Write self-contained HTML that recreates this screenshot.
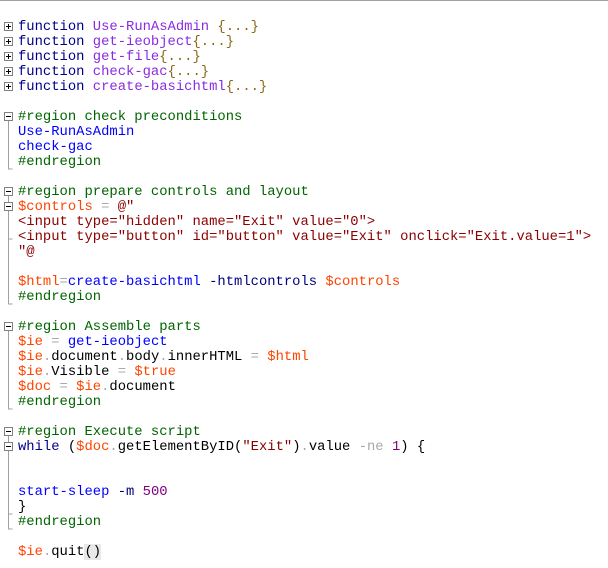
<!DOCTYPE html>
<html><head><meta charset="utf-8"><style>
html,body{margin:0;padding:0;background:#fff;}
body{width:608px;height:566px;position:relative;overflow:hidden;border-top:1px solid #a0a0a0;box-sizing:border-box;}
.w{position:absolute;left:0;top:1px;width:608px;height:566px;}
.l{position:absolute;left:18px;height:15px;line-height:15px;font-family:"Liberation Mono",monospace;font-size:13.85px;white-space:pre;color:#000;}
.k{color:#00008b}.f{color:#8a2be2}.b{color:#8b6914}.c{color:#006400}.m{color:#0000ff}.v{color:#ff4500}.s{color:#8b0000}.o{color:#a9a9a9}.n{color:#800080}.p{color:#000080}
svg{position:absolute;left:0;top:0}
</style></head><body>
<svg width="20" height="566" viewBox="0 0 20 566">
<g fill="#fff" stroke="#808080" stroke-width="1">
<rect x="4.5" y="21.5" width="8" height="8"/><rect x="4.5" y="36.5" width="8" height="8"/><rect x="4.5" y="51.5" width="8" height="8"/><rect x="4.5" y="66.5" width="8" height="8"/><rect x="4.5" y="81.5" width="8" height="8"/>
<rect x="4.5" y="111.5" width="8" height="8"/><rect x="4.5" y="186.5" width="8" height="8"/><rect x="4.5" y="201.5" width="8" height="8"/><rect x="4.5" y="321.5" width="8" height="8"/><rect x="4.5" y="426.5" width="8" height="8"/><rect x="4.5" y="441.5" width="8" height="8"/>
</g>
<g stroke="#000" stroke-width="1">
<path d="M6 25.5h5M8.5 23v5M6 40.5h5M8.5 38v5M6 55.5h5M8.5 53v5M6 70.5h5M8.5 68v5M6 85.5h5M8.5 83v5"/>
<path d="M6 115.5h5M6 190.5h5M6 205.5h5M6 325.5h5M6 430.5h5M6 445.5h5"/>
</g>
<g stroke="#a0a0a0" stroke-width="1" fill="none">
<path d="M8.5 120v48h4"/>
<path d="M8.5 195v6"/>
<path d="M8.5 210v28h4M8.5 238v65h4"/>
<path d="M8.5 330v78h4"/>
<path d="M8.5 435v6"/>
<path d="M8.5 450v63h4M8.5 513v15h4"/>
</g>
</svg>
<div class="w">
<div class="l" style="top:18px"><span class="k">function</span> <span class="f">Use-RunAsAdmin</span> <span class="b">{...}</span></div>
<div class="l" style="top:33px"><span class="k">function</span> <span class="f">get-ieobject</span><span class="b">{...}</span></div>
<div class="l" style="top:48px"><span class="k">function</span> <span class="f">get-file</span><span class="b">{...}</span></div>
<div class="l" style="top:63px"><span class="k">function</span> <span class="f">check-gac</span><span class="b">{...}</span></div>
<div class="l" style="top:78px"><span class="k">function</span> <span class="f">create-basichtml</span><span class="b">{...}</span></div>
<div class="l c" style="top:108px">#region check preconditions</div>
<div class="l m" style="top:123px">Use-RunAsAdmin</div>
<div class="l m" style="top:138px">check-gac</div>
<div class="l c" style="top:153px">#endregion</div>
<div class="l c" style="top:183px">#region prepare controls and layout</div>
<div class="l" style="top:198px"><span class="v">$controls</span> <span class="o">=</span> <span class="s">@"</span></div>
<div class="l s" style="top:213px">&lt;input type="hidden" name="Exit" value="0"&gt;</div>
<div class="l s" style="top:228px">&lt;input type="button" id="button" value="Exit" onclick="Exit.value=1"&gt;</div>
<div class="l s" style="top:243px">"@</div>
<div class="l" style="top:273px"><span class="v">$html</span><span class="o">=</span><span class="m">create-basichtml</span> <span class="p">-htmlcontrols</span> <span class="v">$controls</span></div>
<div class="l c" style="top:288px">#endregion</div>
<div class="l c" style="top:318px">#region Assemble parts</div>
<div class="l" style="top:333px"><span class="v">$ie</span> <span class="o">=</span> <span class="m">get-ieobject</span></div>
<div class="l" style="top:348px"><span class="v">$ie</span><span class="o">.</span>document<span class="o">.</span>body<span class="o">.</span>innerHTML <span class="o">=</span> <span class="v">$html</span></div>
<div class="l" style="top:363px"><span class="v">$ie</span><span class="o">.</span>Visible <span class="o">=</span> <span class="v">$true</span></div>
<div class="l" style="top:378px"><span class="v">$doc</span> <span class="o">=</span> <span class="v">$ie</span><span class="o">.</span>document</div>
<div class="l c" style="top:393px">#endregion</div>
<div class="l c" style="top:423px">#region Execute script</div>
<div class="l" style="top:438px"><span class="k">while</span> (<span class="v">$doc</span><span class="o">.</span>getElementByID(<span class="s">"Exit"</span>)<span class="o">.</span>value <span class="o">-ne</span> <span class="n">1</span>) {</div>
<div class="l" style="top:483px"><span class="m">start-sleep</span> <span class="p">-m</span> <span class="n">500</span></div>
<div class="l" style="top:498px">}</div>
<div class="l c" style="top:513px">#endregion</div>
<div class="l" style="top:543px"><span class="v">$ie</span><span class="o">.</span>quit<span style="background:#e8e8e8">()</span></div>
</div>
</body></html>
